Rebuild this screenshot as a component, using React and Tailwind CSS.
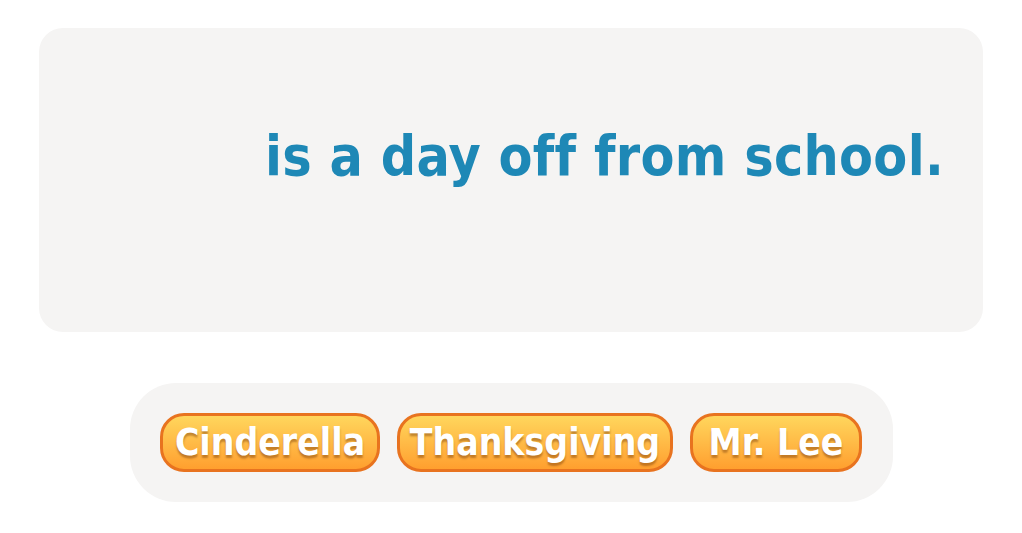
import React from 'react';

const words = [
  { label: 'Cinderella', w: 'w-[220px]' },
  { label: 'Thanksgiving', w: 'w-[276px]' },
  { label: 'Mr. Lee', w: 'w-[172px]' },
];

// --- Word chip ---
const Chip = ({ label, w }) => (
  <button
    type="button"
    className={`${w} h-[59px] rounded-[24px] border-[3px] border-[#e8731f] bg-gradient-to-b from-[#ffd65c] to-[#ff9f2e] text-white text-[37px] font-bold leading-none [font-stretch:condensed] whitespace-nowrap [text-shadow:0_3px_2px_rgba(120,60,10,0.45)]`}
  >
    {label}
  </button>
);

export default function App() {
  return (
    <div
      className="w-[1022px] h-[533px] bg-white pt-[28px] px-[39px] flex flex-col items-center"
      style={{ fontFamily: '"DejaVu Sans", "Liberation Sans", sans-serif' }}
    >
      {/* Sentence card */}
      <div className="w-full h-[304px] rounded-[24px] bg-[#f5f4f3] flex justify-end pr-[39px] pt-[90px]">
        <p className="text-[#1e88b6] text-[55px] font-bold leading-[76px] tracking-[0.3px] [font-stretch:condensed] whitespace-nowrap">
          is a day off from school.
        </p>
      </div>

      {/* Word tray */}
      <div className="mt-[51px] w-[763px] h-[119px] rounded-[46px] bg-[#f5f4f3] flex items-center justify-center gap-[17px]">
        {words.map((item) => (
          <Chip key={item.label} label={item.label} w={item.w} />
        ))}
      </div>
    </div>
  );
}
